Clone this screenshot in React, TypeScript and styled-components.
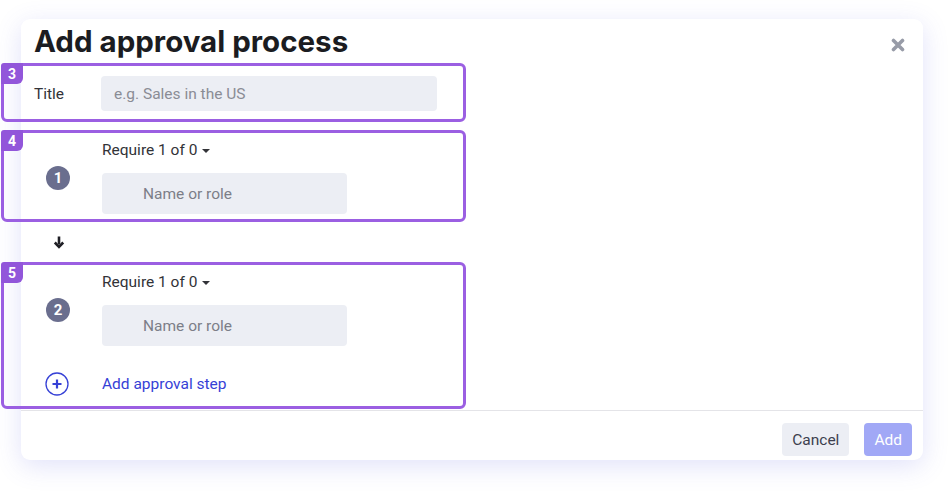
import styled, { createGlobalStyle } from "styled-components";

const GlobalStyle = createGlobalStyle`
    body {
        margin: 0;
        background: #ffffff;
        font-family: Roboto, "Liberation Sans", sans-serif;
        color: #323338;
    }
`;

const Step = ({ num, withAdd }: { num: number; withAdd?: boolean }) => (
    <StepBox>
        <StepRow>
            <StepNumStl>{num}</StepNumStl>
            <StepContentStl>
                <RequireStl>
                    Require 1 of 0
                    <svg width="10" height="6" viewBox="0 0 10 6">
                        <path d="M1 1h8L5 5z" fill="#323338" />
                    </svg>
                </RequireStl>
                <NameInputStl>Name or role</NameInputStl>
            </StepContentStl>
        </StepRow>
        {withAdd && (
            <AddRowStl>
                <PlusStl>
                    <svg width="24" height="24" viewBox="0 0 24 24">
                        <circle cx="12" cy="12" r="11" fill="none" stroke="#3641d6" strokeWidth="1.3" />
                        <path d="M12 7.5v9M7.5 12h9" stroke="#3641d6" strokeWidth="2.2" />
                    </svg>
                </PlusStl>
                <AddLinkStl>Add approval step</AddLinkStl>
            </AddRowStl>
        )}
    </StepBox>
);

export default function App() {
    return (
        <PageStl>
            <GlobalStyle />
            <ModalStl>
                <HeaderStl>
                    <TituloStl>Add approval process</TituloStl>
                    <CloseStl>
                        <svg width="14" height="14" viewBox="0 0 14 14">
                            <path d="M2.5 2.5l9 9M11.5 2.5l-9 9" stroke="#979ba7" strokeWidth="3.6" strokeLinecap="round" />
                        </svg>
                    </CloseStl>
                </HeaderStl>
                <BodyStl>
                    <SectionStl>
                        <BadgeStl>3</BadgeStl>
                        <TitleRowStl>
                            <LabelStl>Title</LabelStl>
                            <TitleInputStl>e.g. Sales in the US</TitleInputStl>
                        </TitleRowStl>
                    </SectionStl>
                    <SectionStl $top={8}>
                        <BadgeStl>4</BadgeStl>
                        <Step num={1} />
                    </SectionStl>
                    <ArrowRowStl>
                        <svg width="12" height="13" viewBox="0 0 12 13">
                            <path d="M6 0.5v8" stroke="#1f1f25" strokeWidth="2.6" />
                            <path d="M1.8 6.5L6 10.8l4.2-4.3" fill="none" stroke="#1f1f25" strokeWidth="2.6" />
                        </svg>
                    </ArrowRowStl>
                    <SectionStl>
                        <BadgeStl>5</BadgeStl>
                        <Step num={2} withAdd />
                    </SectionStl>
                </BodyStl>
                <FooterStl>
                    <CancelStl>Cancel</CancelStl>
                    <AddBtnStl>Add</AddBtnStl>
                </FooterStl>
            </ModalStl>
        </PageStl>
    );
}

const PageStl = styled.div`
    padding: 19px 26px 32px 21px;
`;

const ModalStl = styled.div`
    width: 902px;
    height: 441px;
    box-sizing: border-box;
    background: #ffffff;
    border-radius: 9px;
    box-shadow: 0 6px 26px rgba(88, 96, 230, 0.18);
    display: flex;
    flex-direction: column;
`;

const HeaderStl = styled.div`
    flex-shrink: 0;
    display: flex;
    justify-content: space-between;
    height: 44px;
    padding: 4px 18px 0 13px;
    box-sizing: border-box;
`;

const TituloStl = styled.h1`
    margin: 0;
    font-family: Inter, Roboto, sans-serif;
    font-size: 29.5px;
    line-height: 36px;
    font-weight: 700;
    color: #1b1c21;
`;

const CloseStl = styled.div`
    margin-top: 14px;
    width: 14px;
    height: 14px;
`;

const BodyStl = styled.div`
    flex: 1;
    display: flex;
    flex-direction: column;
    margin-left: -20px;
`;

const SectionStl = styled.div<{ $top?: number }>`
    position: relative;
    width: 465px;
    box-sizing: border-box;
    margin-top: ${(p) => p.$top || 0}px;
    border: 3px solid #9b5fe2;
    border-radius: 6px;
`;

const BadgeStl = styled.div`
    position: absolute;
    top: -3px;
    left: -3px;
    width: 22px;
    height: 21px;
    background: #9256da;
    border-radius: 3px 0 6px 0;
    color: #ffffff;
    font-size: 14px;
    font-weight: 700;
    display: flex;
    align-items: center;
    justify-content: center;
`;

const TitleRowStl = styled.div`
    display: grid;
    grid-template-columns: 67px 1fr;
    align-items: center;
    padding: 10px 26px 8px 30px;
`;

const LabelStl = styled.span`
    font-size: 15.5px;
    color: #323338;
`;

const TitleInputStl = styled.div`
    height: 35px;
    background: #eceef4;
    border-radius: 4px;
    padding-left: 13px;
    display: flex;
    align-items: center;
    font-size: 15.5px;
    color: #8a8c95;
`;

const StepBox = styled.div`
    display: flex;
    flex-direction: column;
    padding: 7px 0 5px;
`;

const StepRow = styled.div`
    display: flex;
    align-items: center;
`;

const StepNumStl = styled.div`
    width: 24px;
    height: 24px;
    margin: 2px 32px 0 42px;
    border-radius: 50%;
    background: #6a6e8e;
    color: #ffffff;
    font-size: 15px;
    font-weight: 700;
    display: flex;
    align-items: center;
    justify-content: center;
`;

const StepContentStl = styled.div`
    display: flex;
    flex-direction: column;
    gap: 12px;
`;

const RequireStl = styled.div`
    display: flex;
    align-items: center;
    gap: 4px;
    font-size: 15.5px;
    line-height: 21px;
    color: #323338;
`;

const NameInputStl = styled.div`
    width: 245px;
    height: 41px;
    box-sizing: border-box;
    background: #eceef4;
    border-radius: 4px;
    padding-left: 41px;
    display: flex;
    align-items: center;
    font-size: 15.5px;
    color: #7c7e88;
`;

const AddRowStl = styled.div`
    display: flex;
    align-items: center;
    margin-top: 26px;
    padding-bottom: 5px;
`;

const PlusStl = styled.div`
    width: 24px;
    height: 24px;
    margin: 0 33px 0 41px;
`;

const AddLinkStl = styled.span`
    font-size: 15.5px;
    color: #3641d6;
`;

const ArrowRowStl = styled.div`
    height: 40px;
    display: flex;
    align-items: center;
    padding-left: 52px;
`;

const FooterStl = styled.div`
    flex-shrink: 0;
    border-top: 1px solid #e4e4e8;
    display: flex;
    justify-content: flex-end;
    gap: 15px;
    padding: 12px 11px 4px;
`;

const CancelStl = styled.div`
    height: 33px;
    padding: 0 10px;
    border-radius: 4px;
    background: #eceef4;
    color: #3c3f4e;
    font-size: 15.5px;
    display: flex;
    align-items: center;
`;

const AddBtnStl = styled(CancelStl)`
    background: #a1a8f6;
    color: #ffffff;
    padding: 0 10px;
`;
